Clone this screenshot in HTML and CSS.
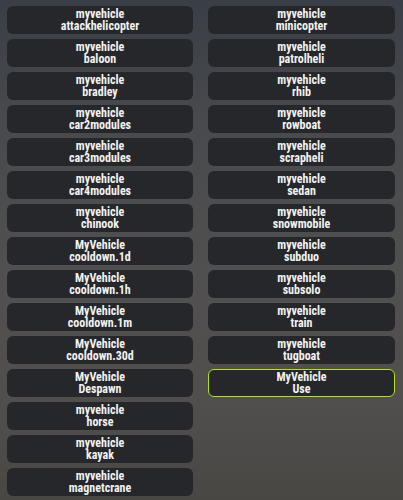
FILE: index.html
```html
<!DOCTYPE html>
<html>
<head>
<meta charset="utf-8">
<link rel="stylesheet" href="styles.css">
</head>
<body>
<div class="grid">
  <button class="btn">myvehicle<br>attackhelicopter</button>
  <button class="btn">myvehicle<br>baloon</button>
  <button class="btn">myvehicle<br>bradley</button>
  <button class="btn">myvehicle<br>car2modules</button>
  <button class="btn">myvehicle<br>car3modules</button>
  <button class="btn">myvehicle<br>car4modules</button>
  <button class="btn">myvehicle<br>chinook</button>
  <button class="btn">MyVehicle<br>cooldown.1d</button>
  <button class="btn">MyVehicle<br>cooldown.1h</button>
  <button class="btn">MyVehicle<br>cooldown.1m</button>
  <button class="btn">MyVehicle<br>cooldown.30d</button>
  <button class="btn">MyVehicle<br>Despawn</button>
  <button class="btn">myvehicle<br>horse</button>
  <button class="btn">myvehicle<br>kayak</button>
  <button class="btn">myvehicle<br>magnetcrane</button>
  <button class="btn">myvehicle<br>minicopter</button>
  <button class="btn">myvehicle<br>patrolheli</button>
  <button class="btn">myvehicle<br>rhib</button>
  <button class="btn">myvehicle<br>rowboat</button>
  <button class="btn">myvehicle<br>scrapheli</button>
  <button class="btn">myvehicle<br>sedan</button>
  <button class="btn">myvehicle<br>snowmobile</button>
  <button class="btn">myvehicle<br>subduo</button>
  <button class="btn">myvehicle<br>subsolo</button>
  <button class="btn">myvehicle<br>train</button>
  <button class="btn">myvehicle<br>tugboat</button>
  <button class="btn active">MyVehicle<br>Use</button>
</div>
</body>
</html>
```

FILE: styles.css
```css
html, body {
  margin: 0;
  padding: 0;
  width: 403px;
  height: 500px;
  overflow: hidden;
}
body {
  background: linear-gradient(180deg, #3a3e46 0%, #484a4d 25%, #515050 55%, #514f4d 80%, #494744 100%);
  font-family: Roboto, "Liberation Sans", sans-serif;
}
.grid {
  display: grid;
  grid-template-columns: 186px 187px;
  grid-template-rows: repeat(15, 28px);
  grid-auto-flow: column;
  column-gap: 15px;
  row-gap: 5px;
  padding: 6px 0 0 7px;
}
.btn {
  margin: 0;
  padding: 0;
  border: none;
  border-radius: 6px;
  background: #25272b;
  color: #f2f2f2;
  font-family: inherit;
  font-weight: bold;
  font-size: 12px;
  font-stretch: 80%;
  line-height: 12px;
  text-align: center;
  box-sizing: border-box;
}
.btn.active {
  border: 1.5px solid #b5e01c;
}
```
